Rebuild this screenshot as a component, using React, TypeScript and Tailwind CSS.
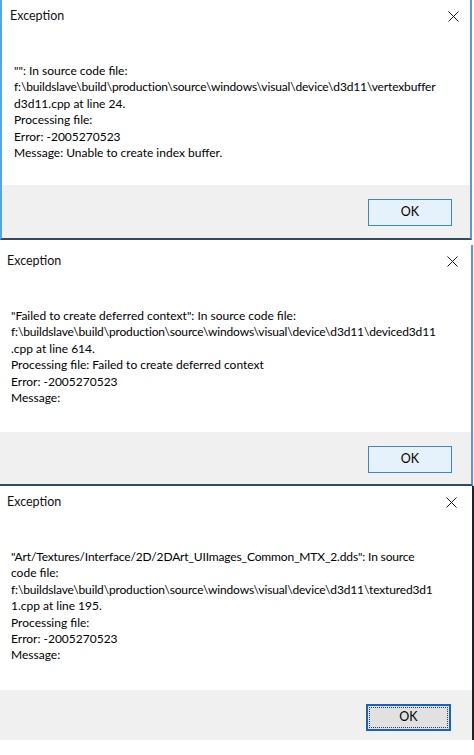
import React from "react";

type DialogProps = {
  lines: string[];
  bodyHeight: string;
  footerHeight: string;
  frame: string;
  textInset: string;
  titleInset: string;
  closeInset: string;
  buttonInset: string;
  focused?: boolean;
};

function CloseIcon() {
  return (
    <svg width="11" height="11" viewBox="0 0 11 11" aria-hidden="true">
      <path d="M0.5 0.5 L10.5 10.5 M10.5 0.5 L0.5 10.5" stroke="#1a1a1a" strokeWidth="1" />
    </svg>
  );
}

function ExceptionDialog({
  lines,
  bodyHeight,
  footerHeight,
  frame,
  textInset,
  titleInset,
  closeInset,
  buttonInset,
  focused,
}: DialogProps) {
  return (
    <div className={`flex flex-col bg-white ${frame}`}>
      <div className={`flex flex-col ${bodyHeight}`}>
        <div className={`flex h-[32px] items-center justify-between ${titleInset} ${closeInset}`}>
          <span className="text-[12.5px] text-[#111]">Exception</span>
          <CloseIcon />
        </div>
        <div className={`flex flex-col pt-[31px] ${textInset}`}>
          {lines.map((line, i) => (
            <div
              key={i}
              className={`whitespace-pre text-[12px] leading-[16.4px] text-black ${
                line.length > 60 ? "tracking-[-0.15px]" : ""
              }`}
            >
              {line}
            </div>
          ))}
        </div>
      </div>
      <div className={`flex justify-end bg-[#f0f0f0] pt-[14px] ${footerHeight} ${buttonInset}`}>
        {focused ? (
          <button className="flex h-[27px] w-[85px] items-center justify-center border-2 border-[#1b63b8] bg-[#e1e1e1] p-[1px]">
            <span className="flex h-full w-full items-center justify-center border border-dotted border-[#3a3a3a] text-[12.5px] text-black">
              OK
            </span>
          </button>
        ) : (
          <button className="flex h-[27px] w-[84px] items-center justify-center border border-[#3d86cc] bg-[#e5f1fb] text-[12.5px] text-black">
            OK
          </button>
        )}
      </div>
    </div>
  );
}

export default function App() {
  return (
    <div
      className="flex h-[755px] w-[474px] flex-col overflow-hidden bg-white"
      style={{ fontFamily: 'Lato, "Open Sans", sans-serif' }}
    >
      <div className="w-[472px]">
        <ExceptionDialog
          frame="border-l-2 border-r-2 border-b-2 border-l-[#5aa2e3] border-r-[#4e9be0] border-b-[#2f4b68]"
          bodyHeight="h-[185px]"
          footerHeight="h-[53px]"
          titleInset="pl-[8px]"
          closeInset="pr-[11px]"
          textInset="pl-[12px]"
          buttonInset="pr-[18px]"
          lines={[
            '"": In source code file:',
            "f:\\buildslave\\build\\production\\source\\windows\\visual\\device\\d3d11\\vertexbuffer",
            "d3d11.cpp at line 24.",
            "Processing file:",
            "Error: -2005270523",
            "Message: Unable to create index buffer.",
          ]}
        />
      </div>
      <div className="mt-[5px] w-[473px]">
        <ExceptionDialog
          frame="border-r-2 border-b-2 border-r-[#4e9be0] border-b-[#2f4b68]"
          bodyHeight="h-[187px]"
          footerHeight="h-[52px]"
          titleInset="pl-[7px]"
          closeInset="pr-[13px]"
          textInset="pl-[11px]"
          buttonInset="pr-[19px]"
          lines={[
            '"Failed to create deferred context": In source code file:',
            "f:\\buildslave\\build\\production\\source\\windows\\visual\\device\\d3d11\\deviced3d11",
            ".cpp at line 614.",
            "Processing file: Failed to create deferred context",
            "Error: -2005270523",
            "Message:",
          ]}
        />
      </div>
      <div className="w-[474px]">
        <ExceptionDialog
          frame="border-r-2 border-r-[#1e2228]"
          bodyHeight="h-[204px]"
          footerHeight="h-[50px]"
          titleInset="pl-[7px]"
          closeInset="pr-[15px]"
          textInset="pl-[11px]"
          buttonInset="pr-[21px]"
          focused
          lines={[
            '"Art/Textures/Interface/2D/2DArt_UIImages_Common_MTX_2.dds": In source',
            "code file:",
            "f:\\buildslave\\build\\production\\source\\windows\\visual\\device\\d3d11\\textured3d1",
            "1.cpp at line 195.",
            "Processing file:",
            "Error: -2005270523",
            "Message:",
          ]}
        />
      </div>
    </div>
  );
}
